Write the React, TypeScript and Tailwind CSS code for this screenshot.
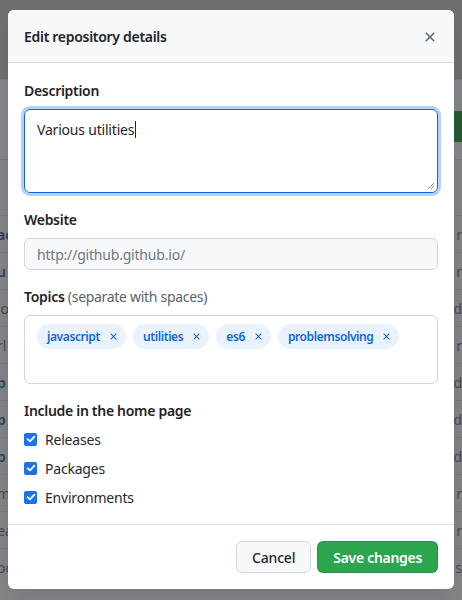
import React from 'react';

const FONT = { fontFamily: '"Noto Sans", "Liberation Sans", Arial, sans-serif' };

const rows = [
  { l: 'ac', r: 'r', blue: true },
  { l: 'u', r: 'r', blue: true },
  { l: 'io', r: 'd', blue: false },
  { l: 'rl', r: 'r', blue: false },
  { l: 'p', r: 'd', blue: true },
  { l: 'p', r: 'd', blue: true },
  { l: 'p', r: 'd', blue: true },
  { l: 'm', r: 'r', blue: false },
  { l: 'ea', r: 'r', blue: false },
  { l: 'oc', r: 's', blue: false },
];

const topics = ['javascript', 'utilities', 'es6', 'problemsolving'];
const homeItems = ['Releases', 'Packages', 'Environments'];

function XIcon({ size = 16, className = '' }: { size?: number; className?: string }) {
  return (
    <svg width={size} height={size} viewBox="0 0 16 16" fill="currentColor" className={className}>
      <path d="M3.72 3.72a.75.75 0 0 1 1.06 0L8 6.94l3.22-3.22a.749.749 0 0 1 1.275.326.749.749 0 0 1-.215.734L9.06 8l3.22 3.22a.749.749 0 0 1-.326 1.275.749.749 0 0 1-.734-.215L8 9.06l-3.22 3.22a.751.751 0 0 1-1.042-.018.751.751 0 0 1-.018-1.042L6.94 8 3.72 4.78a.75.75 0 0 1 0-1.06Z" />
    </svg>
  );
}

function Checkbox() {
  return (
    <span className="flex h-[13px] w-[13px] items-center justify-center rounded-[2px] bg-[#1a73e8]">
      <svg width="10" height="10" viewBox="0 0 10 10" fill="none">
        <path d="M1.6 5.2 4 7.4 8.4 2.6" stroke="white" strokeWidth="1.8" strokeLinecap="round" strokeLinejoin="round" />
      </svg>
    </span>
  );
}

// dimmed page behind the dialog; only its edges show
function Backdrop() {
  return (
    <div className="flex h-[600px] w-[462px] flex-col overflow-hidden bg-[#858688]">
      <div className="h-[80px] border-b border-[#7a7b7d] bg-[#6f7072]" />
      <div className="flex h-[80px] items-center justify-end border-b border-[#7a7b7d] bg-[#87888a]">
        <div className="mt-[14px] h-[31px] w-[20px] bg-[#1f5c2f]" />
      </div>
      <div className="h-[55px]" />
      {rows.map((row, i) => (
        <div key={i} className="flex h-[37px] items-center justify-between border-t border-[#7b7c7e] text-[14px]">
          <span className={row.blue ? 'ml-[-3px] font-semibold text-[#303b58]' : 'ml-[-3px] text-[#45474a]'}>{row.l}</span>
          <span className="text-[#45474a]">{row.r}</span>
        </div>
      ))}
    </div>
  );
}

export default function App() {
  return (
    <div className="relative h-[600px] w-[462px] overflow-hidden" style={FONT}>
      <Backdrop />

      <div className="absolute left-[8px] top-[10px] flex w-[446px] flex-col overflow-hidden rounded-[6px] bg-white text-[#1f2328] shadow-[0_8px_24px_rgba(66,74,83,0.25)]">
        <div className="flex h-[53px] items-center justify-between border-b border-[#d8dee4] bg-[#f6f8fa] px-[16px]">
          <h1 className="pt-[1px] text-[14px] font-semibold leading-5 tracking-[-0.3px]">Edit repository details</h1>
          <XIcon className="mt-[2px] text-[#59636e]" />
        </div>

        <div className="flex flex-col px-[16px] pt-[18px]">
          <label className="text-[14px] font-semibold leading-5 tracking-[-0.3px]">Description</label>
          <div className="relative mt-[8px] h-[84px] rounded-[6px] border border-[#0969da] px-[12px] py-[8px] text-[14px] leading-5 tracking-[-0.2px] shadow-[0_0_0_3px_rgba(9,105,218,0.3)]">
            Various utilities<span className="ml-[1px] inline-block h-[17px] w-[1px] translate-y-[3px] bg-[#1f2328]" />
            <svg className="absolute bottom-[2px] right-[2px]" width="8" height="8" viewBox="0 0 8 8">
              <path d="M7 1 1 7M7 4 4 7" stroke="#8c959f" strokeWidth="1" />
            </svg>
          </div>

          <label className="mt-[17px] text-[14px] font-semibold leading-5 tracking-[-0.3px]">Website</label>
          <div className="mt-[8px] flex h-[32px] items-center rounded-[6px] border border-[#d0d7de] bg-[#f6f8fa] px-[12px] text-[14px] tracking-[-0.2px] text-[#6e7781]">
            http://github.github.io/
          </div>

          <label className="mt-[17px] text-[14px] leading-5 tracking-[-0.3px]">
            <span className="font-semibold">Topics</span> <span className="text-[#59636e]">(separate with spaces)</span>
          </label>
          <div className="mt-[8px] flex h-[69px] items-start gap-[7px] rounded-[6px] border border-[#d0d7de] px-[12px] pt-[8px]">
            {topics.map(t => (
              <span key={t} className="flex h-[25px] items-center gap-[8px] rounded-full bg-[#eaf3fd] pl-[10px] pr-[7px] text-[12px] font-semibold tracking-[-0.4px] text-[#0969da]">
                {t}
                <XIcon size={11} />
              </span>
            ))}
          </div>

          <label className="mt-[17px] text-[14px] font-semibold leading-5 tracking-[-0.3px]">Include in the home page</label>
          <div className="mt-[8px] flex flex-col gap-[9px] pb-[17px]">
            {homeItems.map(item => (
              <div key={item} className="flex h-[20px] items-center gap-[8px] text-[14px] tracking-[-0.2px] text-[#24292f]">
                <Checkbox />
                {item}
              </div>
            ))}
          </div>
        </div>

        <div className="flex justify-end gap-[6px] border-t border-[#d8dee4] p-[16px]">
          <button className="h-[32px] rounded-[6px] border border-[#d0d7de] bg-[#f6f8fa] px-[15px] text-[14px] font-medium tracking-[-0.2px] text-[#24292f]">
            Cancel
          </button>
          <button className="h-[32px] rounded-[6px] border border-[rgba(31,35,40,0.15)] bg-[#2da44e] px-[15px] text-[14px] font-semibold tracking-[-0.3px] text-white">
            Save changes
          </button>
        </div>
      </div>
    </div>
  );
}
